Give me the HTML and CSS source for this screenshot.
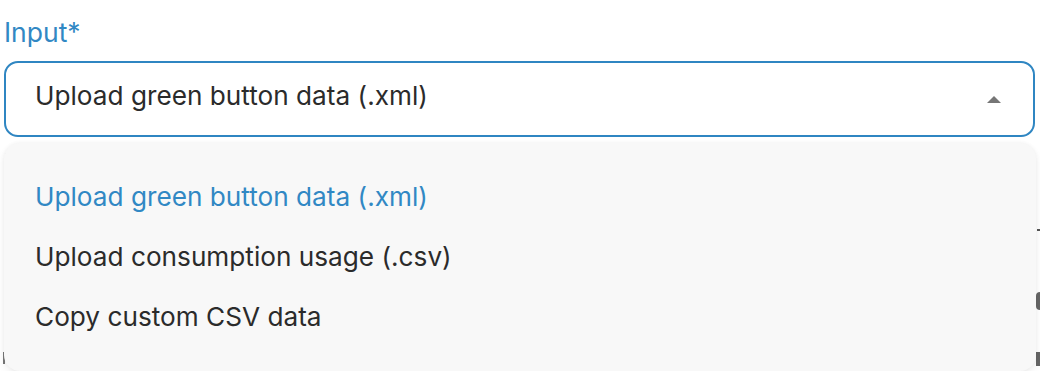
FILE: index.html
```html
<!DOCTYPE html>
<html>
<head>
<meta charset="utf-8">
<link rel="stylesheet" href="styles.css">
</head>
<body>
<div class="page">
  <label class="field-label">Input*</label>
  <div class="select">
    <span class="select-value">Upload green button data (.xml)</span>
    <span class="arrow"></span>
  </div>
  <div class="behind">
    <span class="frag frag-r1"></span>
    <span class="frag frag-r2"></span>
    <span class="frag frag-r3"></span>
    <span class="frag frag-l1"></span>
    <span class="frag frag-l2"></span>
  </div>
  <ul class="menu">
    <li class="item selected">Upload green button data (.xml)</li>
    <li class="item">Upload consumption usage (.csv)</li>
    <li class="item">Copy custom CSV data</li>
  </ul>
</div>
</body>
</html>
```
FILE: styles.css
```css
* { box-sizing: border-box; }
html, body { margin: 0; padding: 0; background: #ffffff; }
body {
  font-family: Inter, "Open Sans", sans-serif;
  color: #2b2b2b;
  width: 1040px;
  height: 371px;
  overflow: hidden;
}
.page {
  position: relative;
  height: 371px;
  padding: 14px 5px 0 4px;
}
.field-label {
  display: block;
  color: #3188c4;
  font-size: 26.5px;
  line-height: 36px;
  margin-left: 0;
}
.select {
  margin-top: 11px;
  height: 76px;
  border: 2px solid #2f86c2;
  border-radius: 14px;
  display: flex;
  align-items: center;
  padding: 0 32px 8px 29px;
  background: #fff;
}
.select-value {
  flex: 1;
  font-size: 26.2px;
}
.arrow {
  width: 0; height: 0;
  margin-top: 8px;
  border-left: 7.5px solid transparent;
  border-right: 7.5px solid transparent;
  border-bottom: 7.5px solid #767676;
}
.behind { position: absolute; inset: 0; }
.frag { position: absolute; background: #555; }
.frag-r1 { left: 1037px; top: 229px; width: 3px; height: 2px; }
.frag-r2 { left: 1036px; top: 292px; width: 4px; height: 18px; border-radius: 4px 0 0 4px; background: #666; }
.frag-r3 { left: 1036px; top: 352px; width: 4px; height: 14px; background: #666; }
.frag-l1 { left: 5px; top: 153px; width: 1px; height: 3px; }
.frag-l2 { left: 3px; top: 352px; width: 2px; height: 12px; background: #777; }
.menu {
  position: absolute;
  left: 4px;
  top: 143px;
  width: 1032px;
  height: 228px;
  margin: 0;
  padding: 23px 0 0;
  list-style: none;
  background: #f8f8f8;
  border-radius: 16px;
  box-shadow: 0 4px 10px rgba(0,0,0,0.06), 0 0 4px rgba(0,0,0,0.05);
}
.item {
  height: 60px;
  display: flex;
  align-items: center;
  padding-left: 31px;
  font-size: 26.2px;
}
.item.selected { color: #3188c4; }
```
